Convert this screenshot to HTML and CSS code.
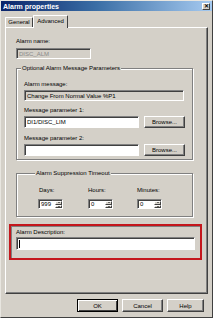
FILE: index.html
```html
<!DOCTYPE html>
<html lang="en">
<head>
    <meta charset="UTF-8">
    <title>Alarm properties</title>
    <link rel="stylesheet" href="styles.css">
</head>
<body>
    <div class="window">
        <div class="titlebar">
            <span class="title">Alarm properties</span>
            <span class="close">&#x2715;</span>
        </div>

        <div class="tabs">
            <div class="tab">General</div>
            <div class="tab active">Advanced</div>
        </div>

        <div class="panel">
            <div class="label name-label">Alarm name:</div>
            <div class="field disabled name-field">DISC_ALM</div>

            <!-- Optional message parameters -->
            <div class="group params">
                <div class="legend">Optional Alarm Message Parameters</div>
                <div class="label first">Alarm message:</div>
                <div class="field readonly msg-field">Change From Normal Value %P1</div>

                <div class="label">Message parameter 1:</div>
                <div class="row">
                    <div class="field param-field">DI1/DISC_LIM</div>
                    <button class="btn browse">Browse...</button>
                </div>

                <div class="label second">Message parameter 2:</div>
                <div class="row">
                    <div class="field param-field"></div>
                    <button class="btn browse">Browse...</button>
                </div>
            </div>

            <!-- Suppression timeout -->
            <div class="group timeout">
                <div class="legend">Alarm Suppression Timeout</div>
                <div class="spin-grid">
                    <div class="label days">Days:</div>
                    <div class="label">Hours:</div>
                    <div class="label">Minutes:</div>
                    <div class="spin"><span class="spin-val">999</span><span class="arrows"><i class="up"></i><i class="down"></i></span></div>
                    <div class="spin"><span class="spin-val">0</span><span class="arrows"><i class="up"></i><i class="down"></i></span></div>
                    <div class="spin"><span class="spin-val">0</span><span class="arrows"><i class="up"></i><i class="down"></i></span></div>
                </div>
            </div>

            <!-- Highlighted description -->
            <div class="highlight">
                <div class="label desc-label">Alarm Description:</div>
                <div class="field desc-field"><span class="caret"></span></div>
            </div>
        </div>

        <div class="buttons">
            <button class="btn default">OK</button>
            <button class="btn">Cancel</button>
            <button class="btn help">Help</button>
        </div>
    </div>
</body>
</html>
```

FILE: styles.css
```css
* {
    margin: 0;
    padding: 0;
    box-sizing: border-box;
}

body {
    background: #d4d0c8;
    font-family: 'Liberation Sans', Arial, sans-serif;
    font-size: 6px;
    color: #000;
}

.window {
    width: 213px;
    height: 318px;
    background: #d4d0c8;
    border: 1px solid;
    border-color: #e8e6e0 #404040 #404040 #e8e6e0;
}

/* Title bar */
.titlebar {
    height: 10px;
    display: flex;
    align-items: center;
    justify-content: space-between;
    padding: 0 2px 0 2px;
    background: linear-gradient(90deg, #0a246a, #3a6ea5 45%, #a6caf0);
}

.title {
    color: #fff;
    font-weight: bold;
    font-size: 7px;
}

.close {
    width: 8px;
    height: 7px;
    background: #d4d0c8;
    border: 1px solid;
    border-color: #fff #404040 #404040 #fff;
    font-size: 5.5px;
    font-weight: bold;
    line-height: 5px;
    text-align: center;
}

/* Tabs */
.tabs {
    height: 16px;
    display: flex;
    align-items: flex-end;
    padding-left: 4px;
}

.tab {
    height: 10px;
    width: 28px;
    line-height: 9px;
    text-align: center;
    border: 1px solid;
    border-bottom: none;
    border-color: #fff #404040 #fff #fff;
    border-radius: 1px 1px 0 0;
}

.tab.active {
    width: 35px;
    height: 13px;
    line-height: 10px;
    margin-bottom: -1px;
    background: #d4d0c8;
    position: relative;
    z-index: 1;
}

.panel {
    margin: 0 4px;
    height: 267px;
    border: 1px solid;
    border-color: #fff #404040 #404040 #fff;
    box-shadow: inset -1px -1px #808080;
}

/* Labels and fields */
.label {
    height: 7px;
    line-height: 7px;
    margin-top: 6px;
}

.name-label {
    margin: 10px 0 0 10px;
}

.field {
    height: 12px;
    line-height: 10px;
    padding-left: 2px;
    background: #fff;
    border: 1px solid;
    border-color: #808080 #fff #fff #808080;
    box-shadow: inset 1px 1px #404040;
    white-space: nowrap;
    overflow: hidden;
}

.field.disabled {
    background: #d4d0c8;
    color: #8a8a8a;
}

.field.readonly {
    background: #d4d0c8;
}

.name-field {
    width: 75px;
    height: 11px;
    margin: 3px 0 0 10px;
}

/* Group boxes */
.group {
    margin-left: 10px;
    width: 177px;
    border: 1px solid #808080;
    box-shadow: inset 1px 1px #fff, 1px 1px #fff;
    padding-left: 7px;
}

.legend {
    display: inline-block;
    height: 7px;
    line-height: 7px;
    margin: -4px 0 0 -3px;
    padding: 0 1px;
    background: #d4d0c8;
    vertical-align: top;
}

.params {
    margin-top: 9px;
    height: 92px;
}

.params .label.second {
    margin-top: 7px;
}

.msg-field {
    width: 160px;
    height: 11px;
    margin-top: 2px;
}

.row {
    display: flex;
    gap: 5px;
    margin-top: 2px;
    height: 12px;
}

.param-field {
    width: 115px;
}

.btn {
    font-family: 'Liberation Sans', Arial, sans-serif;
    font-size: 6px;
    color: #000;
    background: #d4d0c8;
    border: 1px solid;
    border-color: #fff #404040 #404040 #fff;
    box-shadow: inset -1px -1px #808080;
}

.browse {
    width: 41px;
    height: 12px;
}

.timeout {
    margin-top: 13px;
    height: 44px;
    padding-left: 21px;
}

.spin-grid {
    display: grid;
    grid-template-columns: 50px 49px auto;
    row-gap: 5px;
    margin-top: 7px;
}

.spin-grid .label {
    margin-top: 0;
}

.spin-grid .days {
    padding-left: 1px;
}

.spin {
    width: 25px;
    height: 10px;
    display: flex;
    background: #fff;
    border: 1px solid;
    border-color: #808080 #fff #fff #808080;
    box-shadow: inset 1px 1px #404040;
}

.spin-val {
    flex: 1;
    line-height: 8px;
    padding-left: 2px;
}

.arrows {
    width: 7px;
    display: flex;
    flex-direction: column;
    margin-top: 1px;
}

.arrows i {
    flex: 1;
    display: flex;
    align-items: center;
    justify-content: center;
    background: #d4d0c8;
    border: 1px solid;
    border-color: #fff #404040 #404040 #fff;
}

.arrows i::after {
    content: "";
    border-left: 1.5px solid transparent;
    border-right: 1.5px solid transparent;
}

.arrows .up::after {
    border-bottom: 1.5px solid #000;
}

.arrows .down::after {
    border-top: 1.5px solid #000;
}

/* Red highlight box */
.highlight {
    margin: 7px 0 0 3px;
    width: 193px;
    height: 36px;
    border: 2px solid #c4161c;
    box-shadow: inset 2px 2px 0 -1px #808080;
    padding-left: 5px;
}

.desc-label {
    margin-top: 3px;
}

.desc-field {
    width: 179px;
    height: 13px;
    margin-top: 1px;
    padding-top: 2px;
}

.caret {
    display: block;
    width: 1px;
    height: 8px;
    background: #000;
}

/* Dialog buttons */
.buttons {
    display: flex;
    justify-content: flex-end;
    gap: 4px;
    margin-top: 5px;
    padding-right: 8px;
}

.buttons .btn {
    width: 41px;
    height: 13px;
}

.buttons .btn.help {
    width: 37px;
}

.btn.default {
    border: 1px solid #000;
    box-shadow: inset 1px 1px #fff, inset -1px -1px #404040;
}
```
